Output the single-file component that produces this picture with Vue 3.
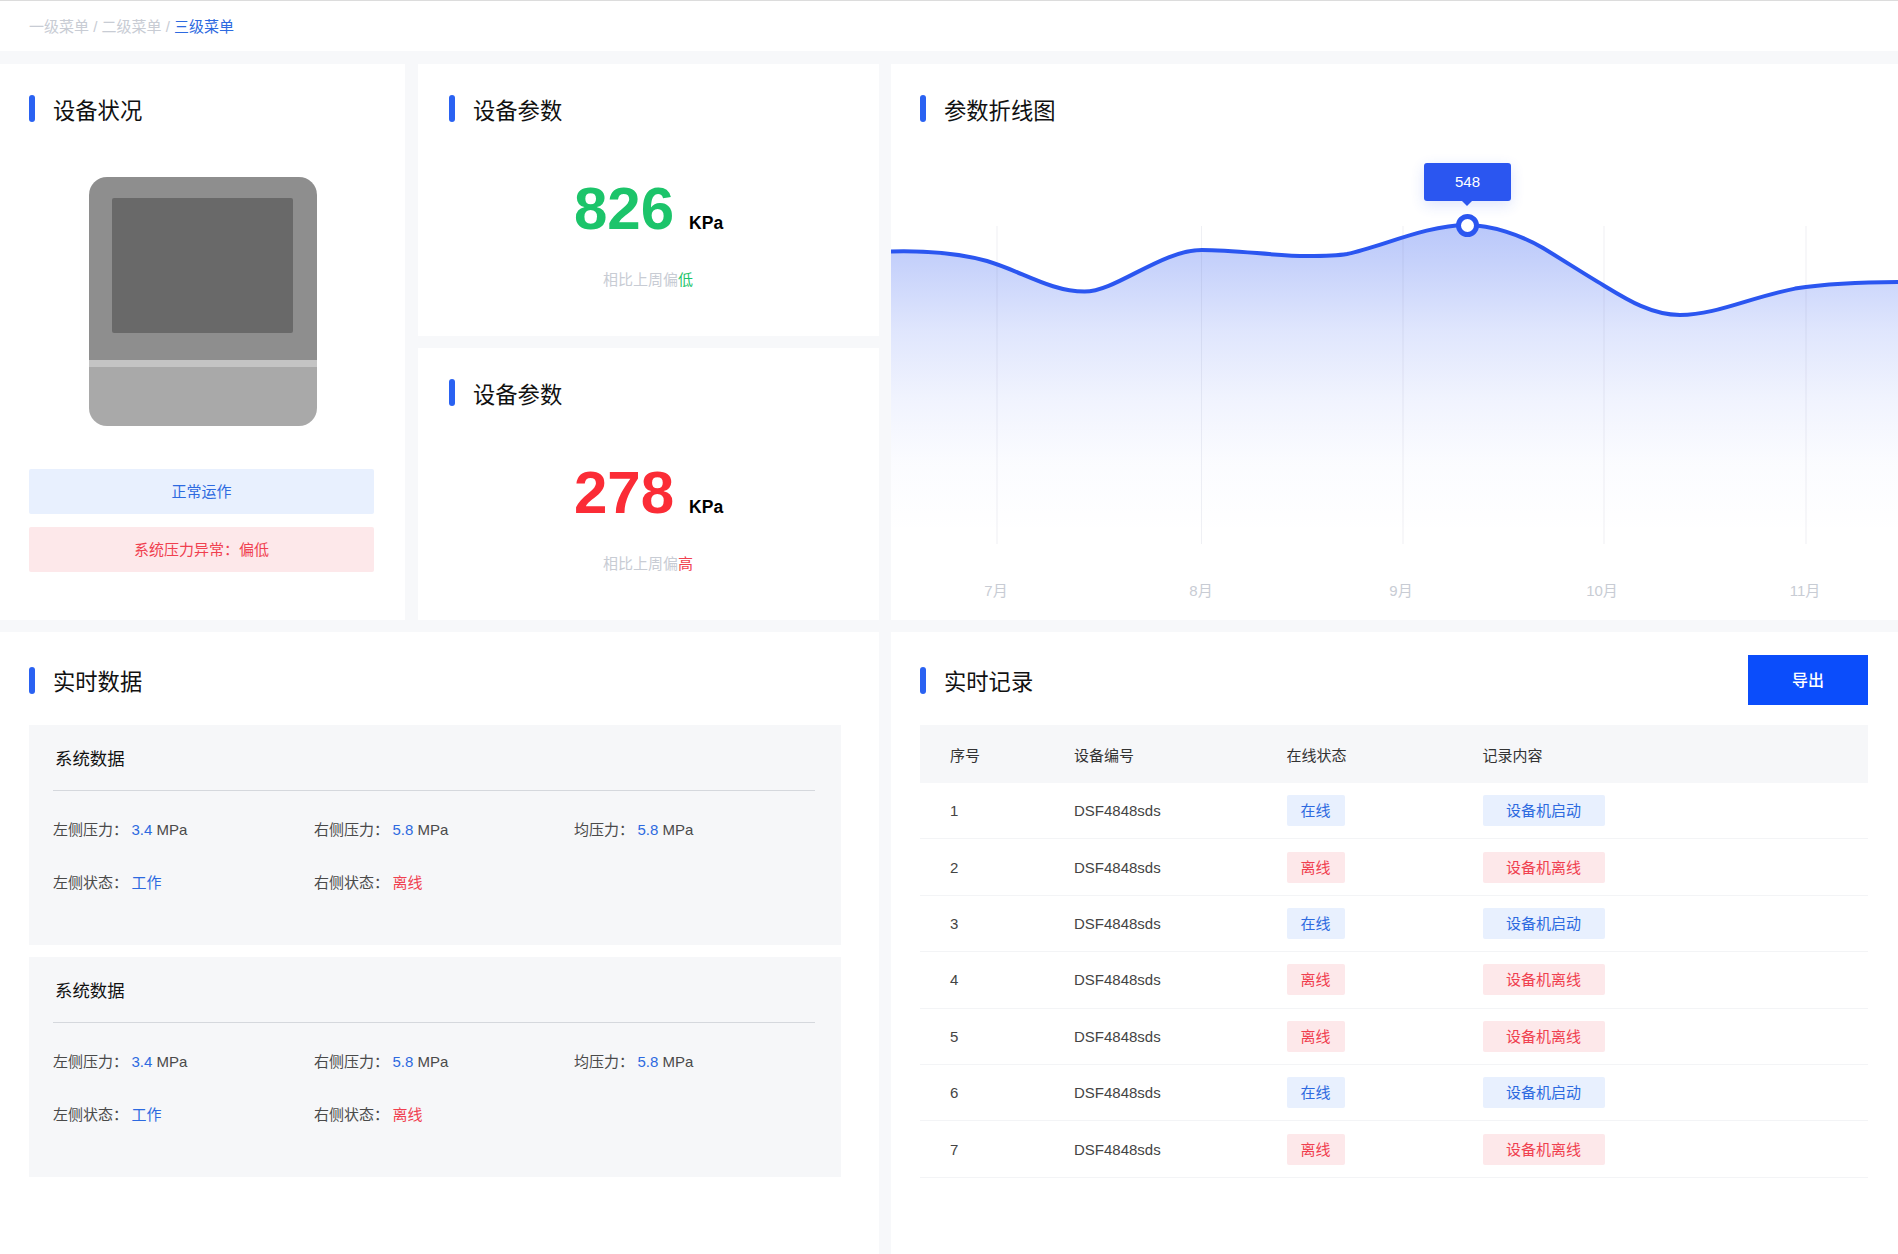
<template>
  <div class="page">
    <!-- 面包屑 -->
    <div class="crumb">
      <span>一级菜单 / 二级菜单 / </span><span class="crumb-now">三级菜单</span>
    </div>

    <div class="row row-top">
      <section class="panel status">
        <h2 class="title"><i></i>设备状况</h2>
        <div class="device">
          <div class="device-top"><div class="device-screen"></div></div>
          <div class="device-band"></div>
          <div class="device-bottom"></div>
        </div>
        <div class="notice notice-ok">正常运作</div>
        <div class="notice notice-bad">系统压力异常：偏低</div>
      </section>

      <div class="params">
        <section v-for="p in params" :key="p.value" class="panel param">
          <h2 class="title"><i></i>设备参数</h2>
          <div class="param-value">
            <b :class="p.tone">{{ p.value }}</b><em>KPa</em>
          </div>
          <p class="param-note">相比上周偏<span :class="p.tone">{{ p.note }}</span></p>
        </section>
      </div>

      <section class="panel chart-panel">
        <h2 class="title"><i></i>参数折线图</h2>
        <div class="chart">
          <svg viewBox="0 0 1007 476" width="1007" height="476">
            <defs>
              <linearGradient id="area" gradientUnits="userSpaceOnUse" x1="0" y1="81" x2="0" y2="390">
                <stop offset="0" stop-color="#2b56f0" stop-opacity="0.33" />
                <stop offset="0.12" stop-color="#2b56f0" stop-opacity="0.27" />
                <stop offset="0.34" stop-color="#2b56f0" stop-opacity="0.15" />
                <stop offset="0.56" stop-color="#2b56f0" stop-opacity="0.07" />
                <stop offset="0.77" stop-color="#2b56f0" stop-opacity="0.02" />
                <stop offset="1" stop-color="#2b56f0" stop-opacity="0" />
              </linearGradient>
            </defs>
            <path :d="curve + ' L1007 400 L0 400 Z'" fill="url(#area)" />
            <line v-for="x in gridX" :key="x" :x1="x" :x2="x" y1="82" y2="400" class="grid-line" />
            <path :d="curve" class="curve" />
            <circle cx="576.5" cy="81.5" r="9" class="dot" />
            <text v-for="m in months" :key="m.label" :x="m.x" y="452" class="axis">{{ m.label }}</text>
          </svg>
          <div class="tip">548</div>
        </div>
      </section>
    </div>

    <div class="row row-bottom">
      <section class="panel realtime">
        <div class="head"><h2 class="title"><i></i>实时数据</h2></div>
        <div v-for="n in 2" :key="n" class="sys">
          <h3 class="sys-title">系统数据</h3>
          <div class="sys-grid">
            <div><label>左侧压力：</label><span class="blue">3.4</span> MPa</div>
            <div><label>右侧压力：</label><span class="blue">5.8</span> MPa</div>
            <div><label>均压力：</label><span class="blue">5.8</span> MPa</div>
            <div><label>左侧状态：</label><span class="blue">工作</span></div>
            <div><label>右侧状态：</label><span class="red">离线</span></div>
          </div>
        </div>
      </section>

      <section class="panel records">
        <div class="head">
          <h2 class="title"><i></i>实时记录</h2>
          <button type="button" class="export">导出</button>
        </div>
        <table>
          <thead>
            <tr><th>序号</th><th>设备编号</th><th>在线状态</th><th>记录内容</th></tr>
          </thead>
          <tbody>
            <tr v-for="(r, i) in records" :key="i">
              <td>{{ i + 1 }}</td>
              <td>DSF4848sds</td>
              <td><span class="tag" :class="r ? 'tag-on' : 'tag-off'">{{ r ? '在线' : '离线' }}</span></td>
              <td><span class="tag tag-wide" :class="r ? 'tag-on' : 'tag-off'">{{ r ? '设备机启动' : '设备机离线' }}</span></td>
            </tr>
          </tbody>
        </table>
      </section>
    </div>
  </div>
</template>

<script setup>
const params = [
  { value: 826, note: '低', tone: 'green' },
  { value: 278, note: '高', tone: 'hot' },
]

const curve = 'M0 107.5 C20 107 60 107 96 117 C130 127 160 147.6 193.5 147.6 C225 147.6 270 106 311 106 C345 106 385 112 416 112 C432 112 445 112 456 110 C490 103 535 81 576.5 81 C600 81 630 91 652 104 C675 118 695 131 712 141 C735 155 760 171 789 171 C825 171 860 153 904 144.6 C940 139 975 138 1007 138'

const gridX = [106, 310.5, 512, 713, 915]
const months = [
  { label: '7月', x: 105 },
  { label: '8月', x: 310 },
  { label: '9月', x: 510 },
  { label: '10月', x: 711 },
  { label: '11月', x: 914 },
]

// 1 在线 / 0 离线
const records = [1, 0, 1, 0, 0, 1, 0]
</script>

<style>
body { background: #f7f8fa; }
</style>

<style scoped>
.page {
  width: 100%;
  height: 1254px;
  display: flex;
  flex-direction: column;
  overflow: hidden;
  background: #f7f8fa;
  font-family: "Liberation Sans", "Noto Sans CJK SC", sans-serif;
  font-size: 15px;
  color: #4a4a4a;
}

.crumb {
  height: 50px;
  line-height: 52px;
  padding-left: 29px;
  background: #fff;
  border-top: 1px solid #dcdcdc;
  color: #c8ccd4;
}
.crumb-now { color: #2d6ae0; }

.row { display: flex; gap: 12px; }
.row-top { height: 556px; margin-top: 13px; }
.row-bottom { flex: 1; margin-top: 12px; }

.panel { background: #fff; }

.title {
  margin: 0;
  display: flex;
  align-items: center;
  gap: 18px;
  height: 27px;
  font-size: 22.3px;
  font-weight: 400;
  color: #111;
}
.title i {
  width: 6px;
  height: 27px;
  border-radius: 3px;
  background: #2a62f2;
}

/* 设备状况 */
.status { width: 405px; margin-right: 1px; padding: 31px 31px 0 29px; box-sizing: border-box; }
.device {
  width: 228px;
  height: 249px;
  margin: 55px 0 43px 60px;
  border-radius: 18px;
  overflow: hidden;
  display: flex;
  flex-direction: column;
}
.device-top { height: 183px; padding: 21px 0 0 23px; box-sizing: border-box; background: #8e8e8e; }
.device-screen { width: 181px; height: 135px; background: #696969; border-radius: 2px; }
.device-band { height: 7px; background: #c4c4c4; }
.device-bottom { flex: 1; background: #a9a9a9; }
.notice {
  height: 45px;
  line-height: 45px;
  text-align: center;
  border-radius: 2px;
  margin-bottom: 13px;
}
.notice-ok { background: #e8f0fe; color: #2d6ae0; }
.notice-bad { background: #fde8ea; color: #f0404f; }

/* 设备参数 */
.params { width: 461px; display: flex; flex-direction: column; gap: 12px; }
.param { flex: 1; padding: 31px 0 0 31px; box-sizing: border-box; }
.param-value {
  margin: 52px 0 0 125px;
  height: 70px;
  line-height: 70px;
  white-space: nowrap;
}
.param-value b { font-size: 60px; font-weight: 700; }
.param-value em {
  margin-left: 15px;
  font-size: 17.5px;
  font-style: normal;
  font-weight: 700;
  color: #000;
}
.param-note { margin: 24px 0 0 154px; color: #c8ccd4; }
.green { color: #1cc46a; }
.hot { color: #fb2c36; }
.param-note .hot { color: #f0404f; }

/* 折线图 */
.chart-panel { flex: 1; padding-top: 31px; position: relative; min-width: 0; }
.chart-panel .title { margin-left: 29px; }
.chart { position: relative; margin-top: 22px; height: 476px; }
.chart svg { display: block; }
.grid-line { stroke: rgba(100, 110, 150, 0.1); stroke-width: 1; }
.curve { fill: none; stroke: #2b56f0; stroke-width: 4; }
.dot { fill: #fff; stroke: #2b56f0; stroke-width: 5; }
.axis {
  font-size: 15px;
  fill: #c8ccd4;
  text-anchor: middle;
}
.tip {
  position: absolute;
  left: 533px;
  top: 19px;
  width: 87px;
  height: 38px;
  line-height: 38px;
  text-align: center;
  color: #fff;
  background: #2b56f0;
  border-radius: 3px;
  box-shadow: 0 4px 14px rgba(43, 86, 240, 0.16);
}
.tip::after {
  content: "";
  position: absolute;
  left: 38px;
  top: 38px;
  border: 5.5px solid transparent;
  border-top-color: #2b56f0;
}

/* 实时数据 */
.head {
  display: flex;
  align-items: center;
  justify-content: space-between;
  height: 50px;
  margin-bottom: 20px;
}
.realtime { width: 879px; padding: 23px 38px 0 29px; box-sizing: border-box; }
.sys {
  height: 220px;
  margin-bottom: 12px;
  padding: 0 26px 0 24px;
  background: #f6f7f9;
}
.sys-title {
  margin: 0;
  height: 65px;
  line-height: 68px;
  padding-left: 2px;
  font-size: 17.4px;
  font-weight: 400;
  color: #111;
  border-bottom: 1px solid #d5d8dd;
}
.sys-grid {
  display: grid;
  grid-template-columns: 261px 260px 1fr;
  grid-auto-rows: 53.5px;
  padding-top: 10.5px;
  align-items: center;
}
.sys-grid label { margin-right: 3.5px; }
.blue { color: #2d6ae0; }
.red { color: #f0404f; }

/* 实时记录 */
.records { flex: 1; min-width: 0; padding: 23px 30px 0 29px; }
.export {
  width: 120px;
  height: 50px;
  border: 0;
  padding: 0 0 3px;
  background: #0b4dfb;
  color: #fff;
  font: 500 16px "Liberation Sans", "Noto Sans CJK SC", sans-serif;
}
table { width: 100%; border-collapse: collapse; table-layout: fixed; }
th, td { padding: 0; text-align: left; font-weight: 400; }
th { height: 58px; background: #f6f7f9; color: #333; }
td { height: 55.4px; border-bottom: 1px solid #f3f4f6; color: #444; }
th:nth-child(1), td:nth-child(1) { width: 154px; padding-left: 30px; box-sizing: border-box; }
th:nth-child(2), td:nth-child(2) { width: 212.5px; }
th:nth-child(3), td:nth-child(3) { width: 196px; }
.tag {
  display: inline-block;
  height: 31px;
  line-height: 31px;
  padding: 0 14px;
  border-radius: 2px;
  vertical-align: middle;
}
.tag-wide { padding: 0 23.5px; }
.tag-on { background: #e8f0fe; color: #2d6ae0; }
.tag-off { background: #fde8ea; color: #f0404f; }
</style>
